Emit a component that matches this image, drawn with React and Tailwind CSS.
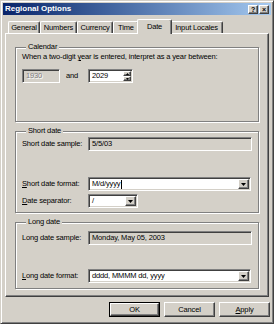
import React from "react";

const sunken =
  "border border-t-[#808080] border-l-[#808080] border-b-white border-r-white shadow-[inset_1px_1px_0_#404040,inset_-1px_-1px_0_#d4d0c8]";
const raised =
  "border border-t-white border-l-white border-b-[#404040] border-r-[#404040] shadow-[inset_-1px_-1px_0_#808080,inset_1px_1px_0_#d4d0c8]";
const group =
  "w-[244px] border border-[#808080] shadow-[inset_1px_1px_0_#fff,1px_1px_0_#fff] px-[6px]";

const tabs = [
  { label: "General", w: "w-[32px]" },
  { label: "Numbers", w: "w-[37px]" },
  { label: "Currency", w: "w-[36px]" },
  { label: "Time", w: "w-[26px]" },
  { label: "Date", w: "w-[35px]", active: true },
  { label: "Input Locales", w: "w-[53px]" },
];

function Arrow() {
  return (
    <svg width="5" height="3" viewBox="0 0 5 3" className="block">
      <path d="M0 0 L5 0 L2.5 3 Z" fill="#000" />
    </svg>
  );
}

function Legend({ children }) {
  return <legend className="ml-[4px] px-[2px] leading-[10px] bg-[#d4d0c8]">{children}</legend>;
}

function Combo({ value, width, caret }) {
  return (
    <div className={`${sunken} ${width} h-[14px] bg-white flex items-stretch p-[1px]`}>
      <div className="flex-1 flex items-center pl-[2px] overflow-hidden whitespace-nowrap">
        {value}
        {caret && <span className="inline-block w-px h-[9px] bg-black ml-px" />}
      </div>
      <div className={`${raised} w-[11px] bg-[#d4d0c8] flex items-center justify-center`}>
        <Arrow />
      </div>
    </div>
  );
}

function Row({ ul, rest, children, className = "" }) {
  return (
    <div className={`flex items-center ${className}`}>
      <div className="w-[66px] whitespace-nowrap">
        <span className="underline">{ul}</span>
        {rest}
      </div>
      {children}
    </div>
  );
}

function Btn({ children, def }) {
  return (
    <div className={`w-[51px] h-[15px] ${def ? "border border-black" : ""}`}>
      <div className={`${raised} h-full w-full bg-[#d4d0c8] flex items-center justify-center`}>
        {children}
      </div>
    </div>
  );
}

export default function App() {
  return (
    <div className="w-[274px] h-[324px] bg-[#d4d0c8] border border-t-[#d4d0c8] border-l-[#d4d0c8] border-b-[#404040] border-r-[#404040] shadow-[inset_1px_1px_0_#fff,inset_-1px_-1px_0_#808080] p-[2px] font-['Liberation_Sans',Arial,sans-serif] text-[7.5px] tracking-[-0.15px] text-black leading-[10px] overflow-hidden">
      {/* title bar */}
      <div className="h-[12px] bg-gradient-to-r from-[#0a246a] to-[#a6caf0] flex items-center px-[2px]">
        <span className="text-white font-bold text-[8px] tracking-normal flex-1">Regional Options</span>
        <div className={`${raised} w-[10px] h-[9px] bg-[#d4d0c8] flex items-center justify-center font-bold text-[7px] leading-none`}>?</div>
        <div className={`${raised} w-[10px] h-[9px] bg-[#d4d0c8] flex items-center justify-center font-bold text-[7px] leading-none ml-px`}>×</div>
      </div>

      {/* tabs */}
      <div className="mt-[4px] ml-[5px] h-[14px] flex items-end">
        {tabs.map((t) =>
          t.active ? (
            <div
              key={t.label}
              className={`${t.w} -mx-[2px] h-[15px] -mb-px relative z-10 bg-[#d4d0c8] border-l border-t border-r border-l-white border-t-white border-r-[#404040] rounded-t-[2px] shadow-[inset_-1px_0_0_#808080] flex items-center justify-center`}
            >
              {t.label}
            </div>
          ) : (
            <div
              key={t.label}
              className={`${t.w} h-[12px] border-l border-t border-r border-l-white border-t-white border-r-[#404040] rounded-t-[2px] shadow-[inset_-1px_0_0_#808080] flex items-center justify-center whitespace-nowrap`}
            >
              {t.label}
            </div>
          )
        )}
      </div>

      {/* panel */}
      <div className="mx-[2px] h-[264px] border border-t-white border-l-white border-b-[#404040] border-r-[#404040] shadow-[inset_-1px_-1px_0_#808080] pt-[8px] pl-[9px]">
        <fieldset className={`${group} pb-[38px]`}>
          <Legend>Calendar</Legend>
          <div className="whitespace-nowrap">
            When a two-digit <span className="underline">y</span>ear is entered, interpret as a year between:
          </div>
          <div className="flex items-center mt-[7px]">
            <div className={`${sunken} w-[38px] h-[14px] bg-[#d4d0c8] flex items-center pl-[3px] text-[#808080] [text-shadow:1px_1px_0_#fff]`}>
              1930
            </div>
            <div className="w-[22px] ml-[6px]">and</div>
            <div className={`${sunken} w-[45px] h-[14px] bg-white flex items-stretch p-[1px]`}>
              <div className="flex-1 flex items-center pl-[2px]">2029</div>
              <div className="w-[8px] flex flex-col">
                <div className={`${raised} flex-1 bg-[#d4d0c8] flex items-center justify-center`}>
                  <svg width="3" height="2" viewBox="0 0 3 2"><path d="M1.5 0 L3 2 L0 2 Z" fill="#000" /></svg>
                </div>
                <div className={`${raised} flex-1 bg-[#d4d0c8] flex items-center justify-center`}>
                  <svg width="3" height="2" viewBox="0 0 3 2"><path d="M0 0 L3 0 L1.5 2 Z" fill="#000" /></svg>
                </div>
              </div>
            </div>
          </div>
        </fieldset>

        <fieldset className={`${group} mt-[4px] pb-[4px]`}>
          <Legend>Short date</Legend>
          <Row rest="Short date sample:" className="mt-[1px]">
            <div className={`${sunken} w-[164px] h-[14px] bg-[#d4d0c8] flex items-center pl-[3px]`}>5/5/03</div>
          </Row>
          <Row ul="S" rest="hort date format:" className="mt-[26px]">
            <Combo value="M/d/yyyy" width="w-[163px]" caret />
          </Row>
          <Row ul="D" rest="ate separator:" className="mt-[3px]">
            <Combo value="/" width="w-[50px]" />
          </Row>
        </fieldset>

        <fieldset className={`${group} mt-[4px] pb-[5px]`}>
          <Legend>Long date</Legend>
          <Row rest="Long date sample:" className="mt-[4px]">
            <div className={`${sunken} w-[164px] h-[14px] bg-[#d4d0c8] flex items-center pl-[3px] whitespace-nowrap`}>
              Monday, May 05, 2003
            </div>
          </Row>
          <Row ul="L" rest="ong date format:" className="mt-[24px]">
            <Combo value="dddd, MMMM dd, yyyy" width="w-[163px]" />
          </Row>
        </fieldset>
      </div>

      {/* buttons */}
      <div className="mt-[5px] flex justify-end gap-[4px] pr-[1px]">
        <Btn def>OK</Btn>
        <Btn>Cancel</Btn>
        <Btn>
          <span>
            <span className="underline">A</span>pply
          </span>
        </Btn>
      </div>
    </div>
  );
}
